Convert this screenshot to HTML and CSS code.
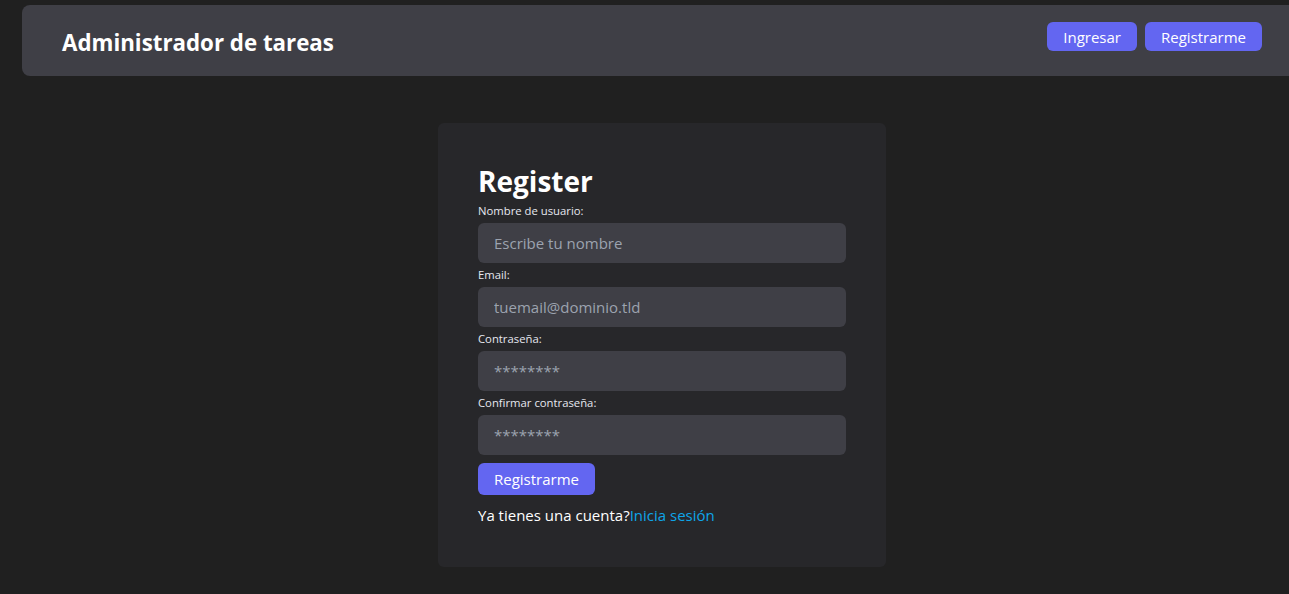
FILE: index.html
```html
<!DOCTYPE html>
<html lang="es">
<head>
<meta charset="utf-8">
<title>Administrador de tareas</title>
<link rel="stylesheet" href="styles.css">
</head>
<body>
<div class="page">
  <header class="topbar">
    <h2 class="brand">Administrador de tareas</h2>
    <nav class="nav">
      <button class="btn btn-sm">Ingresar</button>
      <button class="btn btn-sm">Registrarme</button>
    </nav>
  </header>
  <main class="main">
    <form class="card">
      <h1 class="card-title">Register</h1>
      <label class="label">Nombre de usuario:</label>
      <input class="input" type="text" placeholder="Escribe tu nombre">
      <label class="label">Email:</label>
      <input class="input" type="email" placeholder="tuemail@dominio.tld">
      <label class="label">Contraseña:</label>
      <input class="input" type="password" placeholder="********">
      <label class="label">Confirmar contraseña:</label>
      <input class="input" type="password" placeholder="********">
      <button class="btn btn-submit" type="button">Registrarme</button>
      <p class="alt">Ya tienes una cuenta?<a class="link" href="#">Inicia sesión</a></p>
    </form>
  </main>
</div>
</body>
</html>
```
FILE: styles.css
```css
* { box-sizing: border-box; }
html, body { margin: 0; }
body {
  background: #202020;
  color: #ffffff;
  font-family: "Open Sans", "Noto Sans", sans-serif;
  overflow: hidden;
}
.page {
  width: 1280px;
  margin: 5px 0 0 22px;
}
.topbar {
  height: 71px;
  background: #3f3f46;
  border-radius: 8px;
  display: flex;
  justify-content: space-between;
  align-items: center;
  padding: 0 40px;
}
.brand {
  margin: 4px 0 0;
  font-size: 22.3px;
  line-height: 32px;
  font-weight: 700;
}
.nav {
  display: flex;
  gap: 8px;
  align-self: flex-start;
  margin-top: 17px;
}
.btn {
  background: #6366f1;
  color: #ffffff;
  border: 0;
  border-radius: 6px;
  font-family: inherit;
  font-size: 15px;
  padding: 0 16px;
  cursor: pointer;
}
.btn-sm { height: 29px; }
.main { padding-top: 47px; }
.card {
  width: 448px;
  margin: 0 auto;
  background: #27272a;
  border-radius: 6px;
  padding: 40px;
  display: flex;
  flex-direction: column;
  align-items: flex-start;
}
.card-title {
  margin: 0;
  font-size: 28px;
  line-height: 36px;
  font-weight: 700;
}
.label {
  display: block;
  margin-top: 4px;
  font-size: 11.3px;
  line-height: 16px;
  color: #e6e8f0;
}
.input {
  display: block;
  width: 100%;
  height: 40px;
  margin-top: 4px;
  background: #3f3f46;
  border: 0;
  border-radius: 6px;
  padding: 0 16px;
  color: #ffffff;
  font-family: inherit;
  font-size: 15px;
  outline: none;
}
.input::placeholder { color: #9ca3af; }
.btn-submit {
  margin-top: 8px;
  height: 32px;
}
.alt {
  margin: 8px 0 0;
  font-size: 15px;
  line-height: 24px;
}
.link {
  color: #0ea5e9;
  text-decoration: none;
}
```
